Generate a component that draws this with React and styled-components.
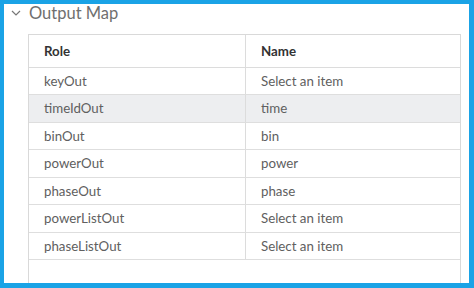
import styled, { createGlobalStyle } from "styled-components";

const GlobalStyle = createGlobalStyle`
	html, body {
		margin: 0;
		padding: 0;
		background: #1aa3e6;
	}
	body {
		font-family: "Lato", "Open Sans", sans-serif;
	}
`;

const Frame = styled.div`
	box-sizing: border-box;
	width: 474px;
	height: 288px;
	padding: 4px 5px 5px 4px;
	background: #1aa3e6;
`;

const Panel = styled.div`
	box-sizing: border-box;
	height: 100%;
	background: #fff;
	overflow: hidden;
	display: flex;
	flex-direction: column;
`;

const Header = styled.div`
	display: flex;
	align-items: center;
	gap: 8px;
	height: 22px;
	padding-left: 7px;
	margin-top: -2px;
	color: #6f6f6f;
	font-size: 16.5px;
`;

const TableBox = styled.div`
	flex: 1;
	margin: 10px 8px 0 24px;
	border: 1px solid #d9d9d9;
	border-bottom: none;
`;

const Table = styled.table`
	width: 100%;
	border-collapse: collapse;
	font-size: 13.3px;
	color: #606060;
`;

const HeadCell = styled.th`
	height: 31.5px;
	text-align: left;
	padding: 0 0 0 15px;
	font-weight: 700;
	color: #333;
	border-bottom: 1px solid #dcdcdc;
	width: ${(p) => p.$width || "auto"};
	& + & {
		border-left: 1px solid #dcdcdc;
	}
`;

const Row = styled.tr`
	background: ${(p) => (p.$selected ? "#edeef0" : "#fff")};
`;

const Cell = styled.td`
	height: 26.5px;
	padding: 0 0 0 15px;
	border-bottom: 1px solid #dedede;
	& + & {
		border-left: 1px solid #dcdcdc;
	}
`;

const rows = [
	["keyOut", "Select an item"],
	["timeIdOut", "time", true],
	["binOut", "bin"],
	["powerOut", "power"],
	["phaseOut", "phase"],
	["powerListOut", "Select an item"],
	["phaseListOut", "Select an item"],
];

function Chevron() {
	return (
		<svg width="10" height="8" viewBox="0 0 10 8">
			<path d="M1 2 L5 6 L9 2" fill="none" stroke="#777" strokeWidth="1.2" />
		</svg>
	);
}

export default function App() {
	return (
		<Frame>
			<GlobalStyle />
			<Panel>
				<Header>
					<Chevron />
					<span>Output Map</span>
				</Header>
				<TableBox>
					<Table>
						<thead>
							<tr>
								<HeadCell $width="201px">Role</HeadCell>
								<HeadCell>Name</HeadCell>
							</tr>
						</thead>
						<tbody>
							{rows.map(([role, name, selected]) => (
								<Row key={role} $selected={selected}>
									<Cell>{role}</Cell>
									<Cell>{name}</Cell>
								</Row>
							))}
						</tbody>
					</Table>
				</TableBox>
			</Panel>
		</Frame>
	);
}
